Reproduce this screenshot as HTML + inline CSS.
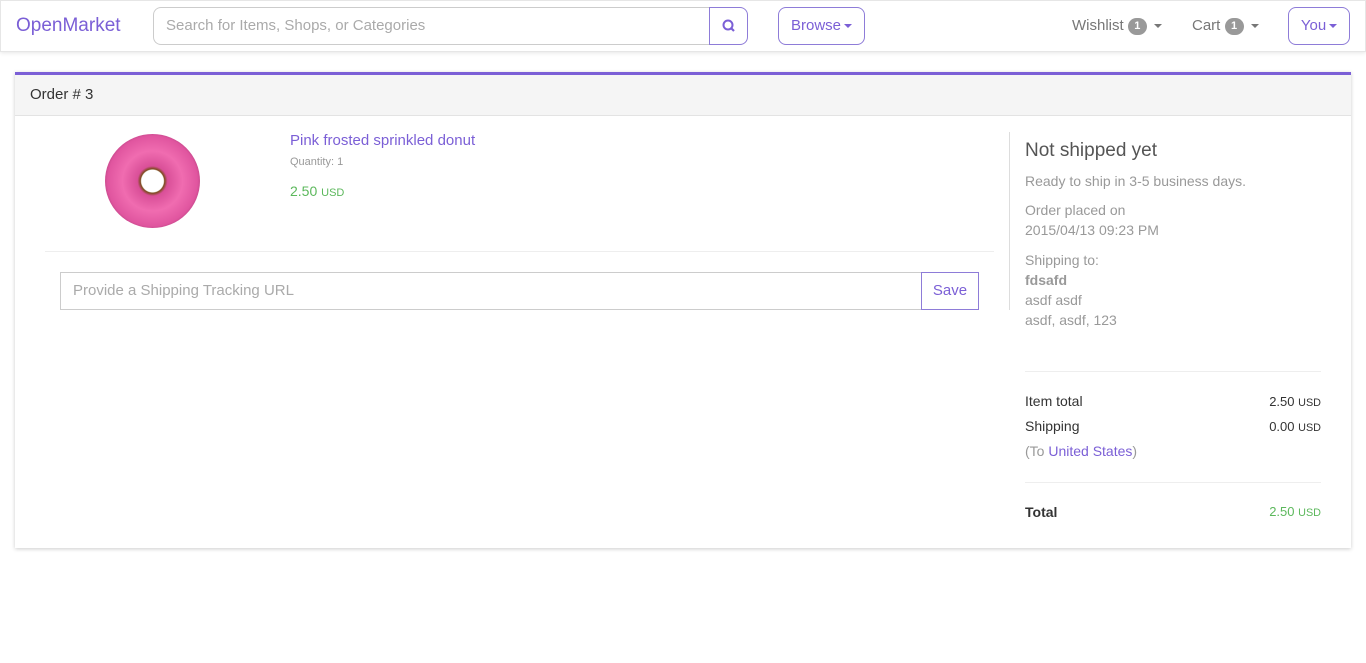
<!DOCTYPE html>
<html><head><style>
*{box-sizing:border-box}
body{margin:0;font-family:"Liberation Sans",sans-serif;background:#fff;color:#333;width:1366px;height:663px;overflow:hidden;position:relative}
.a{position:absolute}
.nav{position:absolute;left:0;top:0;width:1366px;height:52px;border:1px solid #e6e6e6;box-shadow:0 1px 4px rgba(0,0,0,.1);background:#fff}
.btn{position:absolute;border:1px solid #8e7cd8;border-radius:8px;color:#7b5fd6;font-size:15px;text-align:center;line-height:36px;height:38px}
.caret{display:inline-block;border-left:4px solid transparent;border-right:4px solid transparent;border-top:4px solid currentColor;vertical-align:middle;margin-left:3px}
.badge{display:inline-block;background:#999;color:#fff;border-radius:9px;font-size:11px;font-weight:bold;width:19px;height:17px;line-height:17px;text-align:center;vertical-align:middle}
.g{color:#999}
.row{display:flex;justify-content:space-between;height:25px;line-height:25px}
</style></head><body>
<div class="nav">
<div class="a" style="left:15px;top:14px;font-size:19px;color:#7b5fd6">OpenMarket</div>
<div class="a" style="left:152px;top:6px;width:557px;height:38px;border:1px solid #ccc;border-right:none;border-radius:8px 0 0 8px;font-size:15px;color:#aaa;padding:9px 12px">Search for Items, Shops, or Categories</div>
<div class="a" style="left:708px;top:6px;width:39px;height:38px;border:1px solid #8e7cd8;border-radius:0 8px 8px 0">
<svg width="37" height="36" viewBox="0 0 37 36"><circle cx="18" cy="17" r="4.5" fill="none" stroke="#7b5fd6" stroke-width="2"/><line x1="21" y1="20" x2="24" y2="23" stroke="#7b5fd6" stroke-width="2.2"/></svg></div>
<div class="btn" style="left:777px;top:6px;width:87px">Browse<span class="caret"></span></div>
<div class="a" style="left:1071px;top:16px;font-size:15px;color:#777">Wishlist <span class="badge">1</span> <span class="caret"></span></div>
<div class="a" style="left:1191px;top:16px;font-size:15px;color:#777">Cart <span class="badge">1</span> <span class="caret"></span></div>
<div class="btn" style="left:1287px;top:6px;width:62px">You<span class="caret"></span></div>
</div>
<div class="a" style="left:15px;top:72px;width:1336px;height:476px;box-shadow:0 1px 4px rgba(0,0,0,.2);border-top:3px solid #7b5fd6;background:#fff">
<div style="height:41px;background:#f5f5f5;border-bottom:1px solid #e3e3e3;padding:11px 15px;font-size:15px">Order # 3</div>
</div>
<div class="a" style="left:105px;top:134px;width:95px;height:94px;border-radius:50%;background:radial-gradient(circle at 50% 50%,#fff 0 11px,#7a4a1a 12px,#d94f98 15px,#f06cb0 30px,#e0559f 45px,#c84a8d 48px)"></div>
<div class="a" style="left:290px;top:132px;font-size:15px;color:#7b5fd6">Pink frosted sprinkled donut</div>
<div class="a" style="left:290px;top:156px;font-size:11px;color:#999">Quantity: 1</div>
<div class="a" style="left:290px;top:183px;font-size:14px;color:#5cb85c">2.50 <span style="font-size:11px">USD</span></div>
<div class="a" style="left:45px;top:251px;width:949px;border-top:1px solid #eee"></div>
<div class="a" style="left:60px;top:272px;width:862px;height:38px;border:1px solid #ccc;font-size:15px;color:#aaa;padding:9px 12px">Provide a Shipping Tracking URL</div>
<div class="a" style="left:921px;top:272px;width:58px;height:38px;border:1px solid #8e7cd8;color:#7b5fd6;font-size:15px;text-align:center;line-height:36px">Save</div>
<div class="a" style="left:1009px;top:132px;height:178px;border-left:1px solid #ddd"></div>
<div class="a" style="left:1025px;top:140px;font-size:19px;color:#555">Not shipped yet</div>
<div class="a g" style="left:1025px;top:171px;font-size:14px;line-height:20px">Ready to ship in 3-5 business days.</div>
<div class="a g" style="left:1025px;top:200px;font-size:14px;line-height:20px">Order placed on<br>2015/04/13 09:23 PM</div>
<div class="a g" style="left:1025px;top:250px;font-size:14px;line-height:20px">Shipping to:<br><b>fdsafd</b><br>asdf asdf<br>asdf, asdf, 123</div>
<div class="a" style="left:1025px;top:371px;width:296px;border-top:1px solid #eee"></div>
<div class="a" style="left:1025px;top:389px;width:296px;font-size:14px">
<div class="row"><span>Item total</span><span style="font-size:13px">2.50 <small>USD</small></span></div>
<div class="row"><span>Shipping</span><span style="font-size:13px">0.00 <small>USD</small></span></div>
<div class="row g"><span>(To <span style="color:#7b5fd6">United States</span>)</span></div>
</div>
<div class="a" style="left:1025px;top:482px;width:296px;border-top:1px solid #eee"></div>
<div class="a" style="left:1025px;top:504px;width:296px;font-size:14px;display:flex;justify-content:space-between"><b>Total</b><span style="color:#5cb85c;font-size:13px">2.50 <small>USD</small></span></div>
</body></html>
